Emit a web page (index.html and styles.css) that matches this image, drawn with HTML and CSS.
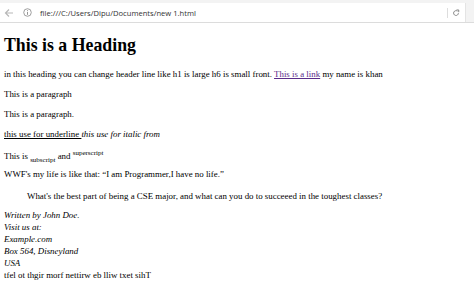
FILE: index.html
```html
<!DOCTYPE html>
<html>
<head>
<meta charset="utf-8">
<link rel="stylesheet" href="styles.css">
</head>
<body>
<div class="toolbar">
  <div class="nav">
    <svg class="back" width="10" height="10" viewBox="0 0 10 10"><path d="M9 5H1.5M5 1.5L1.5 5 5 8.5" fill="none" stroke="#b8b8b8" stroke-width="1.2"/></svg>
    <svg class="info" width="9" height="9" viewBox="0 0 10 10"><circle cx="5" cy="5" r="4.2" fill="none" stroke="#8a8a8a" stroke-width="0.9"/><path d="M5 4.3V7.6M5 2.4V3.3" stroke="#8a8a8a" stroke-width="1"/></svg>
  </div>
  <div class="field">
    <span class="url">file:///C:/Users/Dipu/Documents/new 1.html</span>
    <span class="sep"></span>
    <svg class="reload" width="8" height="8" viewBox="0 0 10 10"><path d="M8 5.2A3 3 0 1 1 6.8 2.7" fill="none" stroke="#777" stroke-width="1.1"/><path d="M5.6 1.2H8.4V4" fill="none" stroke="#777" stroke-width="1.1"/></svg>
  </div>
</div>
<main class="page">
  <h1 class="heading">This is a Heading</h1>
  <p>in this heading you can change header line like h1 is large h6 is small front. <a class="link" href="#">This is a link</a> my name is khan</p>
  <p>This is a paragraph</p>
  <p>This is a paragraph.</p>
  <p><u>this use for underline </u><i>this use for italic from</i></p>
  <p class="subsup">This is <sub>subscript</sub> and <sup>superscript</sup></p>
  <p class="wwf">WWF's my life is like that: <q>I am Programmer,I have no life.</q></p>
  <blockquote class="quote">What's the best part of being a CSE major, and what can you do to succeeed in the toughest classes?</blockquote>
  <address class="addr">Written by John Doe.<br>Visit us at:<br>Example.com<br>Box 564, Disneyland<br>USA</address>
  <p class="rev">tfel ot thgir morf nettirw eb lliw txet sihT</p>
</main>
</body>
</html>
```
FILE: styles.css
```css
html, body {
  margin: 0;
  padding: 0;
  background: #fff;
}
.toolbar {
  background: #f3f3f3;
  border-bottom: 1px solid #dcdcdc;
  display: flex;
  align-items: stretch;
  padding-top: 3px;
  box-sizing: border-box;
  height: 23px;
}
.nav {
  display: flex;
  align-items: center;
  gap: 9px;
  padding-left: 4px;
  width: 33px;
  background: #fff;
}
.field {
  flex: 1;
  display: flex;
  align-items: center;
  background: #fff;
  margin-right: 8px;
  border-right: 1px solid #e4e4e4;
}
.url {
  font-family: "Open Sans", "Noto Sans", sans-serif;
  font-size: 7.6px;
  color: #333;
  padding-left: 3px;
  flex: 1;
}
.sep {
  width: 1px;
  height: 10px;
  background: #ddd;
  margin-right: 4px;
}
.reload {
  margin-right: 5px;
}
.page {
  font-family: "Liberation Serif", "Times New Roman", serif;
  font-size: 8.9px;
  line-height: 12px;
  color: #000;
  padding: 0 4px;
}
.heading {
  font-size: 17.8px;
  line-height: 22px;
  margin: 11px 0 12px;
}
.page p {
  margin: 8px 0;
}
.link {
  color: #5b2c8a;
}
sub, sup {
  font-size: 7px;
  line-height: 0;
}
.page p.subsup {
  margin: 10px 0 0;
}
.page p.wwf {
  margin: 6px 0 8px;
}
.quote {
  margin: 10px 23px 7px;
}
.addr {
  font-style: italic;
}
.page p.rev {
  margin: 0;
}
```
